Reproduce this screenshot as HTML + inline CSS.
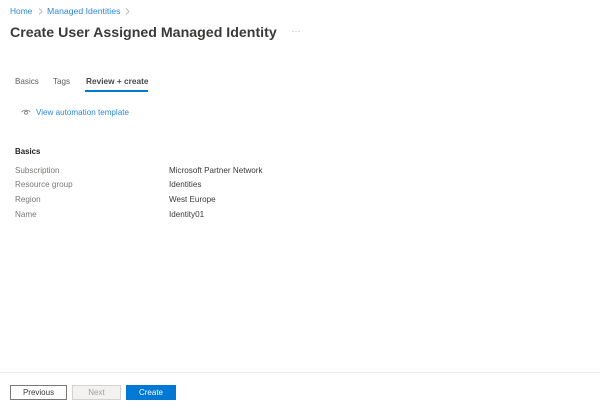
<!DOCTYPE html>
<html><head><meta charset="utf-8"><style>
html,body{margin:0;padding:0;background:#fff}
body{width:600px;height:404px;position:relative;overflow:hidden;font-family:"Liberation Sans",sans-serif;font-size:8.1px;color:#3b3a39}
.a{position:absolute;white-space:nowrap;line-height:12px}
.l{color:#2b88d8}
.g{color:#7a7876}
.btn{position:absolute;top:385px;height:15px;line-height:14px;text-align:center;box-sizing:border-box;font-size:8px}
</style></head><body>
<div class="a l" style="left:10px;top:5px;font-size:8.4px">Home</div>
<svg class="a" style="left:38px;top:8px" width="6" height="7" viewBox="0 0 6 7"><path d="M1 .5L4 3.5L1 6.5" fill="none" stroke="#a19f9d" stroke-width=".7"/></svg>
<div class="a l" style="left:47px;top:5px;font-size:8.7px">Managed Identities</div>
<svg class="a" style="left:125px;top:8px" width="6" height="7" viewBox="0 0 6 7"><path d="M1 .5L4 3.5L1 6.5" fill="none" stroke="#a19f9d" stroke-width=".7"/></svg>
<div class="a" style="left:10px;top:23px;font-size:14.2px;line-height:20px;font-weight:bold;color:#3b3a39">Create User Assigned Managed Identity</div>
<svg class="a" style="left:292px;top:30px" width="9" height="3" viewBox="0 0 9 3"><circle cx="1" cy="1.5" r=".5" fill="#a19f9d"/><circle cx="4" cy="1.5" r=".5" fill="#a19f9d"/><circle cx="7" cy="1.5" r=".5" fill="#a19f9d"/></svg>
<div class="a" style="left:15px;top:76px;color:#605e5c">Basics</div>
<div class="a" style="left:53px;top:76px;color:#605e5c">Tags</div>
<div class="a" style="left:86px;top:75px;font-weight:bold;font-size:8.3px;color:#4a4948">Review + create</div>
<div class="a" style="left:85px;top:90px;width:63px;height:2px;background:#0078d4"></div>
<svg class="a" style="left:21px;top:108px" width="10" height="8" viewBox="0 0 10 8"><path d="M.7 4.2C2.6 1.4 7.4 1.4 9.3 4.2" fill="none" stroke="#7a7876" stroke-width=".8"/><circle cx="5" cy="4.8" r="1.5" fill="none" stroke="#7a7876" stroke-width=".8"/></svg>
<div class="a l" style="left:36px;top:107px">View automation template</div>
<div class="a" style="left:15px;top:146px;font-weight:bold;font-size:7.9px;color:#252423">Basics</div>
<div class="a g" style="left:15px;top:165px">Subscription</div>
<div class="a" style="left:169px;top:165px">Microsoft Partner Network</div>
<div class="a g" style="left:15px;top:179px">Resource group</div>
<div class="a" style="left:169px;top:179px">Identities</div>
<div class="a g" style="left:15px;top:194px">Region</div>
<div class="a" style="left:169px;top:194px">West Europe</div>
<div class="a g" style="left:15px;top:209px">Name</div>
<div class="a" style="left:169px;top:209px">Identity01</div>
<div class="a" style="left:0;top:372px;width:600px;height:1px;background:#ebebeb"></div>
<div class="btn" style="left:10px;width:57px;border:1px solid #7a7876;color:#3b3a39">Previous</div>
<div class="btn" style="left:72px;width:49px;border:1px solid #d4d2d0;background:#f3f2f1;color:#a19f9d">Next</div>
<div class="btn" style="left:126px;width:50px;background:#0078d4;color:#fff;line-height:15px">Create</div>
</body></html>
